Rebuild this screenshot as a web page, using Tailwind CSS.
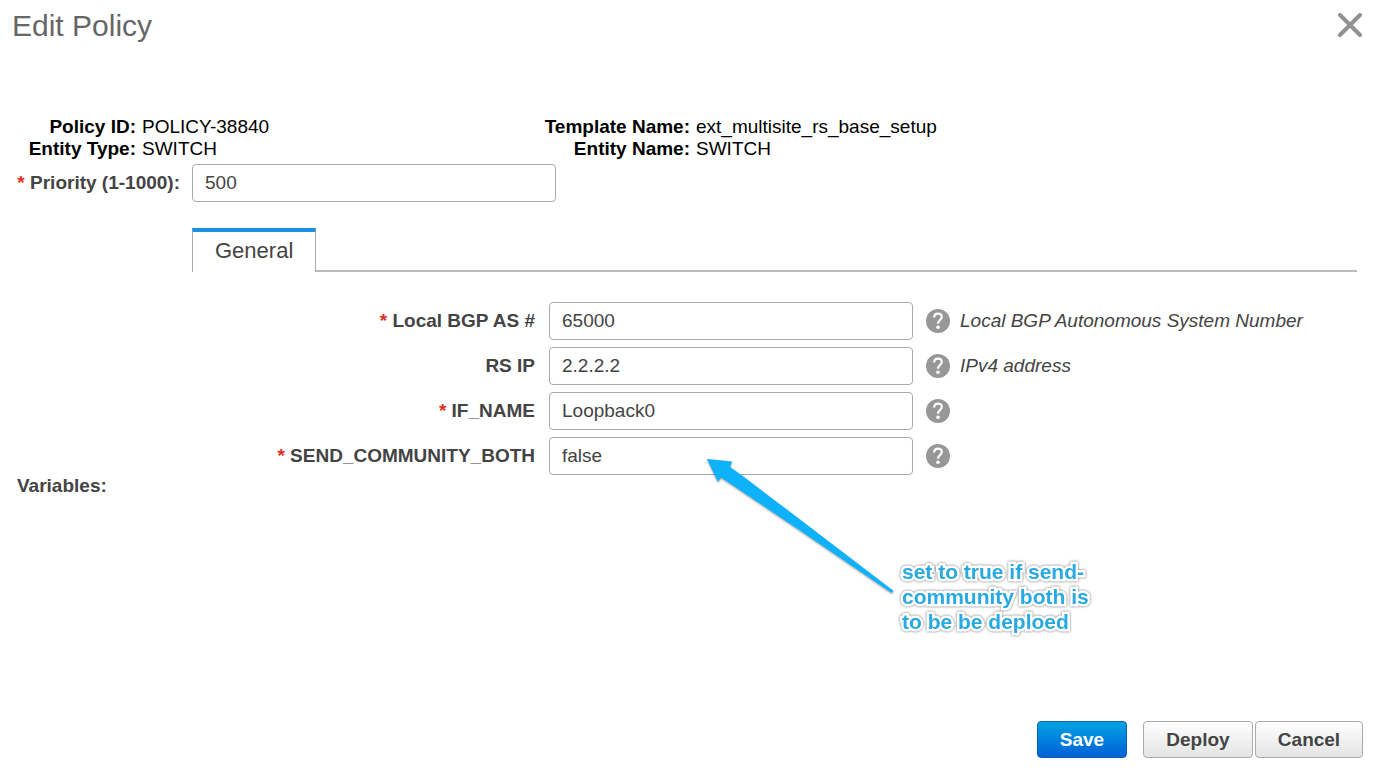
<!DOCTYPE html>
<html lang="en">
<head>
    <meta charset="utf-8"/>
    <meta content="width=device-width, initial-scale=1.0" name="viewport"/>
    <title>Edit Policy</title>
    <script src="https://cdn.jsdelivr.net/npm/@tailwindcss/browser@4"></script>
    <style>
        body {
            font-family: 'Liberation Sans', Arial, sans-serif;
        }
        .callout {
            -webkit-text-stroke: 5px #fff;
            paint-order: stroke fill;
            filter: drop-shadow(0 0 1px rgba(0, 0, 0, 0.6));
        }
    </style>
</head>
<body class="bg-white text-[#444]">
    <svg class="hidden">
        <symbol id="help" viewBox="0 0 24 24">
            <circle cx="12" cy="12" r="12" fill="#979797"/>
            <path d="M8.2 8.4C8.2 6 9.8 4.6 12 4.6s3.8 1.4 3.8 3.4c0 2.9-3.8 3.2-3.8 6.8" fill="none" stroke="#fff" stroke-width="2.2"/>
            <circle cx="12" cy="18.2" r="1.8" fill="#fff"/>
        </symbol>
    </svg>
    <form class="flex min-h-screen flex-col text-[19px] leading-[22px]">
        <header class="flex items-center justify-between pt-2 pr-[21px] pl-3">
            <h1 class="text-[30px] leading-9 text-[#666]">Edit Policy</h1>
            <button class="size-[26px]" type="button" aria-label="Close">
                <svg class="size-[26px]" viewBox="0 0 26 26" fill="none" stroke="#929292" stroke-width="4" stroke-linecap="round">
                    <path d="M3 2l20 20M23 2L3 22"/>
                </svg>
            </button>
        </header>

        <main class="pt-[72px]">
            <dl class="grid grid-cols-[136px_388px_154px_1fr] gap-x-[6px] text-black">
                <dt class="text-right font-bold">Policy ID:</dt>
                <dd>POLICY-38840</dd>
                <dt class="text-right font-bold">Template Name:</dt>
                <dd>ext_multisite_rs_base_setup</dd>
                <dt class="text-right font-bold">Entity Type:</dt>
                <dd>SWITCH</dd>
                <dt class="text-right font-bold">Entity Name:</dt>
                <dd>SWITCH</dd>
            </dl>

            <div class="mt-1 flex items-center gap-3">
                <label class="w-[180px] text-right font-bold" for="priority"><span class="text-[#e1301e]">*</span> Priority (1-1000):</label>
                <input class="h-[38px] w-[364px] rounded border border-[#aaa] px-3" id="priority" type="text" value="500">
            </div>

            <div class="mt-[26px] flex items-end pr-[27px]">
                <div class="w-[192px] pl-[17px] font-bold">Variables:</div>
                <section class="flex-1 pb-[22px]">
                    <div class="flex">
                        <button class="h-11 border-x border-t-4 border-x-[#aaa] border-t-[#1c91e0] px-[22px] pb-[2px] text-[22px]" type="button">General</button>
                        <div class="flex-1 border-b-2 border-[#bbb]"></div>
                    </div>
                    <div class="mt-[30px] flex flex-col gap-[7px]">
                        <div class="flex items-center">
                            <label class="mr-[14px] w-[343px] text-right font-bold" for="asn"><span class="text-[#e1301e]">*</span> Local BGP AS #</label>
                            <input class="h-[38px] w-[364px] rounded border border-[#aaa] px-3" id="asn" type="text" value="65000">
                            <svg class="mr-[10px] ml-[13px] size-6"><use href="#help"/></svg>
                            <em>Local BGP Autonomous System Number</em>
                        </div>
                        <div class="flex items-center">
                            <label class="mr-[14px] w-[343px] text-right font-bold" for="rsip">RS IP</label>
                            <input class="h-[38px] w-[364px] rounded border border-[#aaa] px-3" id="rsip" type="text" value="2.2.2.2">
                            <svg class="mr-[10px] ml-[13px] size-6"><use href="#help"/></svg>
                            <em>IPv4 address</em>
                        </div>
                        <div class="flex items-center">
                            <label class="mr-[14px] w-[343px] text-right font-bold" for="ifname"><span class="text-[#e1301e]">*</span> IF_NAME</label>
                            <input class="h-[38px] w-[364px] rounded border border-[#aaa] px-3" id="ifname" type="text" value="Loopback0">
                            <svg class="mr-[10px] ml-[13px] size-6"><use href="#help"/></svg>
                        </div>
                        <div class="flex items-center">
                            <label class="mr-[14px] w-[343px] text-right font-bold" for="community"><span class="text-[#e1301e]">*</span> SEND_COMMUNITY_BOTH</label>
                            <div class="relative">
                                <input class="block h-[38px] w-[364px] rounded border border-[#aaa] px-3" id="community" type="text" value="false">
                                <!-- arrow and note pointing at the field -->
                                <svg class="pointer-events-none absolute top-[18px] left-[154px] h-[142px] w-[194px] drop-shadow-[0_1px_1px_rgba(0,0,0,0.4)]" viewBox="0 0 194 142">
                                    <path d="M4 4L29 6.5L27 12L37 19L97 64.5L190 135.5Q191 138 188 137.5L97 75.5L18 22.5L15 27Z" fill="#0db2fb"/>
                                </svg>
                                <p class="callout absolute top-[122px] left-[353px] text-[21px] leading-[25px] font-bold whitespace-nowrap text-[#29a9e1]">set to true if send-<br>community both is<br>to be be deploed</p>
                            </div>
                            <svg class="mr-[10px] ml-[13px] size-6"><use href="#help"/></svg>
                        </div>
                    </div>
                </section>
            </div>
        </main>

        <footer class="mt-auto flex justify-end gap-[2px] pr-[21px] pb-[18px] font-bold">
            <button class="mr-[14px] h-[37px] w-[90px] rounded border border-[#0b62b5] bg-linear-to-b from-[#04a2e2] to-[#045fd6] text-white" type="submit">Save</button>
            <button class="h-[37px] w-[110px] rounded border border-[#aaa] bg-linear-to-b from-white to-[#e4e4e4]" type="button">Deploy</button>
            <button class="h-[37px] w-[108px] rounded border border-[#aaa] bg-linear-to-b from-white to-[#e4e4e4]" type="button">Cancel</button>
        </footer>
    </form>
</body>
</html>
